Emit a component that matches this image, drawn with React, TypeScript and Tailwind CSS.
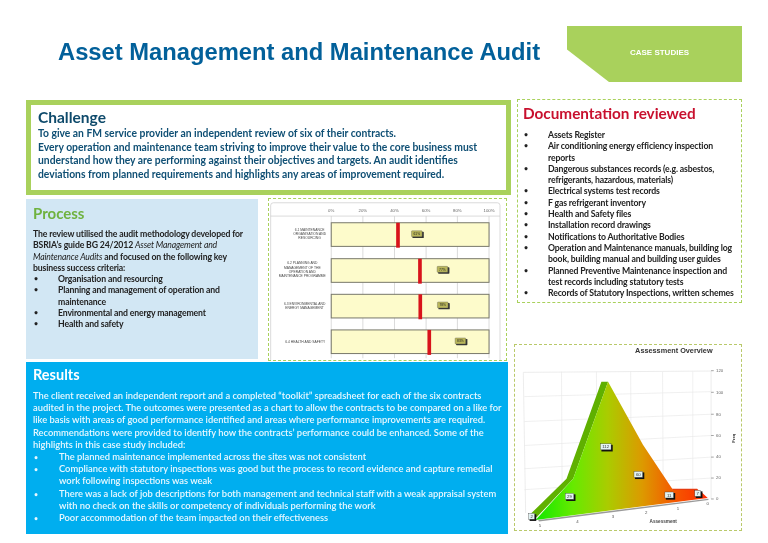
import React from "react";

const lato = "font-['Lato','Noto_Sans',sans-serif]";

function Line({ children, bullet, cls }: { children: React.ReactNode; bullet?: boolean | "cont"; cls?: string }) {
  return (
    <div className={"flex whitespace-nowrap " + (cls ?? "")}>
      {bullet !== undefined && <span className="w-[var(--ind)] shrink-0 pl-[1px] text-[7px]">{bullet === true ? "•" : ""}</span>}
      <span>{children}</span>
    </div>
  );
}

function ProcessChart() {
  const bars = [
    { y: 98, m: 415, tx: 456, ty: 122, pct: "61%", lab: ["6.1 MAINTENANCE", "ORGANISATION AND", "RESOURCING"], ly: 122, cx: 150 },
    { y: 206, m: 481, tx: 533, ty: 229, pct: "77%", lab: ["6.2 PLANNING AND", "MANAGEMENT OF THE", "OPERATION AND", "MAINTENANCE PROGRAMME"], ly: 223, cx: 128 },
    { y: 313, m: 482, tx: 534, ty: 336, pct: "78%", lab: ["6.3 ENVIRONMENTAL AND", "ENERGY MANAGEMENT"], ly: 344, cx: 135 },
    { y: 420, m: 509, tx: 587, ty: 444, pct: "83%", lab: ["6.4 HEALTH AND SAFETY"], ly: 459, cx: 137 },
  ];
  const ticks = [
    [215, "0%"], [310, "20%"], [405, "40%"], [500, "60%"], [594, "80%"], [689, "100%"],
  ] as const;
  return (
    <svg viewBox="28 27 712 483" className="block w-full h-full">
      <rect x="33" y="38" width="689" height="480" rx="8" fill="#fff" stroke="#c9c9c9" strokeWidth="2" />
      <line x1="33" y1="78" x2="722" y2="78" stroke="#c9c9c9" strokeWidth="2" />
      {ticks.map(([x, t]) => (
        <g key={t}>
          <line x1={x} y1="78" x2={x} y2="505" stroke="#c8c8c8" strokeWidth="2" />
          <text x={x} y="67" textAnchor="middle" fontSize="13" fill="#666" fontFamily="Liberation Sans">{t}</text>
        </g>
      ))}
      {bars.map((b) => (
        <g key={b.y}>
          <rect x="215" y={b.y} width="474" height="71" fill="#fdfbcb" stroke="#77776a" strokeWidth="3" />
          <rect x={b.m - 5} y={b.y} width="11" height="75" fill="#d8131b" />
          <rect x={b.tx + 3} y={b.ty + 3} width="34" height="19" rx="2" fill="#333" />
          <rect x={b.tx} y={b.ty} width="32" height="18" rx="2" fill="#b9b65a" stroke="#555" />
          <text x={b.tx + 16} y={b.ty + 13} textAnchor="middle" fontSize="10" fill="#222" fontFamily="Liberation Sans">{b.pct}</text>
          {b.lab.map((l, i) => (
            <text key={l} x={b.cx} y={b.ly + i * 12.5} textAnchor="middle" fontSize="10" fill="#444" fontFamily="Liberation Sans">{l}</text>
          ))}
        </g>
      ))}
    </svg>
  );
}

function OverviewChart() {
  const vx = [55, 170, 275, 378, 474, 565];
  const hy = [
    [185, 170], [260, 238], [332, 302], [402, 367], [465, 430],
  ];
  const nums = [[107, "120"], [172, "100"], [238, "80"], [302, "60"], [367, "40"], [430, "20"], [493, "0"]] as const;
  const tags = [[85, 545, "2"], [195, 485, "29"], [301, 336, "112"], [402, 419, "60"], [495, 481, "11"], [585, 476, "7"]] as const;
  const xl = [[105, 578, "5"], [218, 565, "4"], [325, 550, "3"], [425, 538, "2"], [520, 525, "1"], [610, 512, "0"]] as const;
  return (
    <svg viewBox="30 30 680 556" className="block w-full h-full">
      <defs>
        <linearGradient id="g" x1="90" x2="610" y1="0" y2="0" gradientUnits="userSpaceOnUse">
          <stop offset="0" stopColor="#10e800" />
          <stop offset="0.22" stopColor="#66ea00" />
          <stop offset="0.42" stopColor="#aacc00" />
          <stop offset="0.62" stopColor="#dc9a00" />
          <stop offset="0.8" stopColor="#f45a00" />
          <stop offset="1" stopColor="#ff2a00" />
        </linearGradient>
      </defs>
      <text x="508" y="54" textAnchor="middle" fontSize="22" fontWeight="700" fill="#333" fontFamily="Liberation Sans">Assessment Overview</text>
      <polyline points="55,112 620,108 620,493" fill="none" stroke="#e2e2e2" strokeWidth="2" />
      <polyline points="55,112 62,535" fill="none" stroke="#e4e4e4" strokeWidth="2" />
      {vx.slice(1).map((x) => (
        <line key={x} x1={x} y1="110" x2={x === 565 ? 565 : x + 2} y2={x === 170 ? 520 : 500} stroke="#e8e8e8" strokeWidth="2" />
      ))}
      {hy.map(([a, b]) => (
        <line key={a} x1="58" y1={a} x2="620" y2={b} stroke="#e8e8e8" strokeWidth="2" />
      ))}
      <polygon points="100,556 612,492 612,496 102,561" fill="#9a9a9a" />
      <polygon points="75,540 185,432 290,140 310,140 205,432 95,548" fill="#5fb000" />
      <polygon points="500,462 578,462 604,490 530,490" fill="#e63a10" />
      <polygon points="92,556 205,432 310,140 415,330 505,465 585,467 610,490" fill="url(#g)" />
      {nums.map(([y, t]) => (
        <g key={t}>
          <line x1="620" y1={y} x2="628" y2={y} stroke="#777" strokeWidth="2" />
          <text x="635" y={y + 4} fontSize="13" fill="#666" fontFamily="Liberation Sans">{t}</text>
        </g>
      ))}
      {tags.map(([x, y, t]) => (
        <g key={t}>
          <rect x={x - 14 + 3} y={y - 9 + 3} width={t.length > 2 ? 34 : t.length > 1 ? 28 : 20} height="20" fill="#111" />
          <rect x={x - 14} y={y - 9} width={t.length > 2 ? 32 : t.length > 1 ? 26 : 18} height="18" fill="#e3f3f3" stroke="#333" />
          <text x={x - 14 + (t.length > 2 ? 16 : t.length > 1 ? 13 : 9)} y={y + 5} textAnchor="middle" fontSize="13" fill="#333" fontFamily="Liberation Sans">{t}</text>
        </g>
      ))}
      {xl.map(([x, y, t]) => (
        <text key={t} x={x} y={y} textAnchor="middle" fontSize="13" fill="#555" fontFamily="Liberation Sans">{t}</text>
      ))}
      <text x="476" y="564" textAnchor="middle" fontSize="14" fontWeight="700" fill="#444" fontFamily="Liberation Sans">Assessment</text>
      <text transform="translate(692 310) rotate(-90)" textAnchor="middle" fontSize="13" fontWeight="700" fill="#333" fontFamily="Liberation Sans">Freq</text>
    </svg>
  );
}

export default function App() {
  return (
    <div className={"w-[768px] h-[543px] overflow-hidden bg-white pt-[26px] blur-[0.45px] " + lato}>
      <header className="h-[56px] flex pl-[58px]">
        <h1 className="w-[509px] pt-[10px] text-[23.75px] leading-[32px] font-bold text-[#02609a] whitespace-nowrap font-['Liberation_Sans',sans-serif]">
          Asset Management and Maintenance Audit
        </h1>
        <div className="w-[175px] h-[56px] bg-[#a9d15c] [clip-path:polygon(0_0,100%_0,100%_100%,24%_100%,0_42%)] flex items-center justify-center pb-[2px] pl-[10px]">
          <span className="text-[8px] font-bold font-['Liberation_Sans',sans-serif] text-white">CASE STUDIES</span>
        </div>
      </header>

      <main className="flex mt-[18px] pl-[26px]">
        <div className="w-[485px] shrink-0">
          <section className="h-[95px] border-[5px] border-[#a9d15c] pl-[7px] pt-[4px] text-[#0f4f74] font-bold text-[10.35px] leading-[13.6px]">
            <h2 className="text-[15.5px] leading-[17px] mb-[1px] text-[#0e4a6b]">Challenge</h2>
            <Line>To give an FM service provider an independent review of six of their contracts.</Line>
            <Line>Every operation and maintenance team striving to improve their value to the core business must</Line>
            <Line>understand how they are performing against their objectives and targets.  An audit identifies</Line>
            <Line>deviations from planned requirements and highlights any areas of improvement required.</Line>
          </section>

          <div className="flex mt-[3px]">
            <section className="w-[232px] h-[160px] mt-[1px] bg-[#d2e7f4] pl-[7px] pt-[5px] text-[8.7px] tracking-[-0.15px] leading-[11.3px] font-bold text-[#222] [--ind:25px]">
              <h2 className="text-[15px] tracking-normal leading-[18px] mb-[6px] text-[#6fb23f]">Process</h2>
              <Line>The review utilised the audit methodology developed for</Line>
              <Line>BSRIA’s guide BG 24/2012 <i className="font-normal">Asset Management and</i></Line>
              <Line><i className="font-normal">Maintenance Audits</i> and focused on the following key</Line>
              <Line>business success criteria:</Line>
              <Line bullet>Organisation and resourcing</Line>
              <Line bullet>Planning and management of operation and</Line>
              <Line bullet="cont">maintenance</Line>
              <Line bullet>Environmental and energy management</Line>
              <Line bullet>Health and safety</Line>
            </section>
            <section className="ml-[10px] w-[239px] h-[163px] border border-dashed border-[#a9d15c]">
              <ProcessChart />
            </section>
          </div>

          <section className="w-[482px] h-[172px] mt-[1px] bg-[#00aeef] pl-[7px] pt-[4px] text-[9.35px] leading-[12.2px] font-semibold text-[#e8f8ff] [--ind:26px]">
            <h2 className="text-[14.5px] leading-[18px] mb-[6px] font-bold text-white">Results</h2>
            <Line>The client received an independent report and a completed “toolkit” spreadsheet  for each of the six contracts</Line>
            <Line>audited in the project. The outcomes were presented as a chart to allow the contracts to be compared on a like for</Line>
            <Line>like basis with areas of good performance identified and areas where performance improvements are required.</Line>
            <Line>Recommendations were provided to identify how the contracts’ performance could be enhanced. Some of the</Line>
            <Line>highlights in this case study included:</Line>
            <Line bullet>The planned maintenance implemented across the sites was not consistent</Line>
            <Line bullet>Compliance with statutory inspections was good but the process to record evidence and capture remedial</Line>
            <Line bullet="cont">work following inspections was weak</Line>
            <Line bullet>There was a lack of job descriptions for both management and technical staff with a weak appraisal system</Line>
            <Line bullet="cont">with no check on the skills or competency of individuals performing the work</Line>
            <Line bullet>Poor accommodation of the team impacted on their effectiveness</Line>
          </section>
        </div>

        <div className="flex-1">
          <section className="ml-[6px] -mt-[1px] w-[225px] h-[204px] border border-dashed border-[#a9d15c] pl-[5px] pt-[4px] text-[8.7px] tracking-[-0.15px] leading-[11.3px] font-bold text-[#222] [--ind:25px]">
            <h2 className="text-[15.3px] tracking-normal leading-[18px] mb-[7px] text-[#c8102e]">Documentation reviewed</h2>
            <Line bullet>Assets Register</Line>
            <Line bullet>Air conditioning energy efficiency inspection</Line>
            <Line bullet="cont">reports</Line>
            <Line bullet>Dangerous substances records (e.g. asbestos,</Line>
            <Line bullet="cont">refrigerants, hazardous, materials)</Line>
            <Line bullet>Electrical systems test records</Line>
            <Line bullet>F gas refrigerant inventory</Line>
            <Line bullet>Health and Safety files</Line>
            <Line bullet>Installation record drawings</Line>
            <Line bullet>Notifications to Authoritative Bodies</Line>
            <Line bullet>Operation and Maintenance manuals, building log</Line>
            <Line bullet="cont">book, building manual and building user guides</Line>
            <Line bullet>Planned Preventive Maintenance inspection and</Line>
            <Line bullet="cont">test records including statutory tests</Line>
            <Line bullet>Records of Statutory Inspections, written schemes</Line>
          </section>
          <section className="ml-[3px] mt-[41px] w-[228px] h-[187px] border border-dashed border-[#b9c96a]">
            <OverviewChart />
          </section>
        </div>
      </main>
    </div>
  );
}
